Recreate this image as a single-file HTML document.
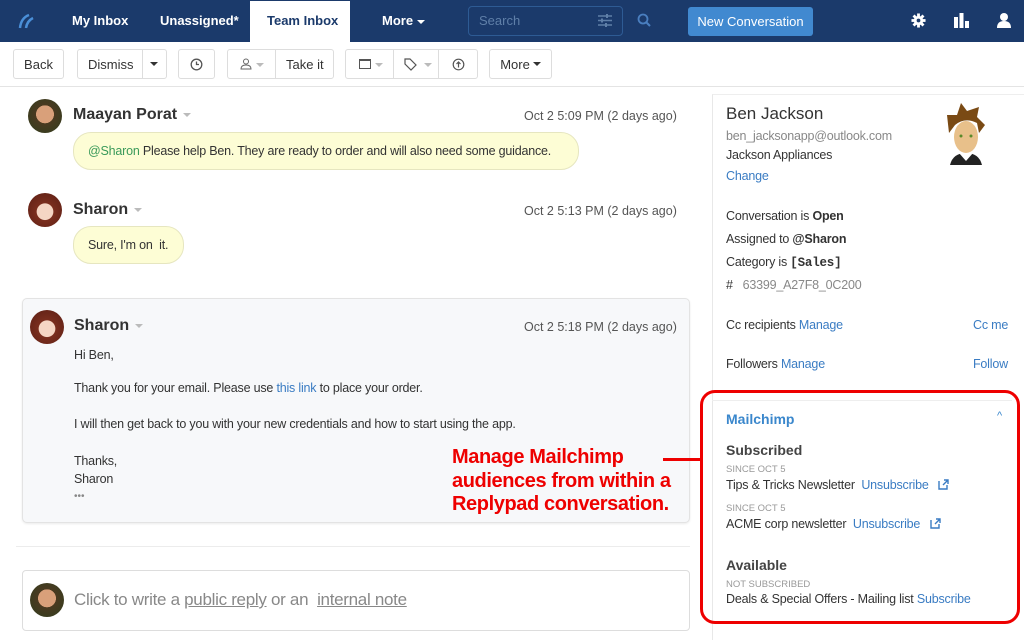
<!DOCTYPE html>
<html><head><meta charset="utf-8"><style>
*{box-sizing:border-box;margin:0;padding:0}
body{width:1024px;height:640px;overflow:hidden;background:#fff;font-family:"Liberation Sans",sans-serif;color:#333;font-size:13px;position:relative}
.abs{position:absolute}
.nav{left:0;top:0;width:1024px;height:42px;background:#1b3a6b}
.btn{position:absolute;top:49px;height:30px;border:1px solid #ddd;border-radius:3px;background:#fff;font-size:13px;color:#333;display:flex;align-items:center;justify-content:center}
.link{color:#3a7cc3}
.avatar{position:absolute;width:34px;height:34px;border-radius:50%}
.name{font-size:16px;font-weight:bold;color:#333}
.time{font-size:12.5px;color:#555}
.bub{position:absolute;background:#fdfdd5;border:1px solid #e6e6c0;border-radius:18px;font-size:12.5px;letter-spacing:-.2px;padding:0 14px;display:flex;align-items:center}
.car{display:inline-block;width:0;height:0;border-left:4px solid transparent;border-right:4px solid transparent;border-top:4px solid #bbb;vertical-align:middle;margin-left:6px}
.side{font-size:12.5px;letter-spacing:-.2px}
</style></head><body>
<div class="abs nav"></div>
<svg class="abs" style="left:17px;top:12px" width="18" height="18" viewBox="0 0 18 18"><path d="M3 16 Q4 6 12 3" stroke="#4a8fd8" stroke-width="2.5" fill="none"/><path d="M9 16 Q10 9 16 6" stroke="#4a8fd8" stroke-width="2.5" fill="none"/></svg>
<div class="abs" style="left:72px;top:13px;color:#fff;font-weight:bold">My Inbox</div>
<div class="abs" style="left:160px;top:13px;color:#fff;font-weight:bold">Unassigned*</div>
<div class="abs" style="left:250px;top:1px;width:100px;height:41px;background:#fff"></div>
<div class="abs" style="left:267px;top:13px;color:#1b3a6b;font-weight:bold">Team Inbox</div>
<div class="abs" style="left:382px;top:13px;color:#fff;font-weight:bold">More <span style="display:inline-block;border-left:4px solid transparent;border-right:4px solid transparent;border-top:4px solid #fff;vertical-align:middle"></span></div>
<div class="abs" style="left:468px;top:6px;width:155px;height:30px;border:1px solid #2e5b94;border-radius:4px;background:#1b3a6b"></div>
<div class="abs" style="left:479px;top:13px;color:#5f7fa8">Search</div>
<svg class="abs" style="left:598px;top:14px" width="14" height="13"><g stroke="#5f7fa8" stroke-width="1.5"><line x1="0" y1="2" x2="14" y2="2"/><line x1="0" y1="6.5" x2="14" y2="6.5"/><line x1="0" y1="11" x2="14" y2="11"/></g><g fill="#5f7fa8"><rect x="8" y="0" width="2" height="4"/><rect x="3" y="4.5" width="2" height="4"/><rect x="7" y="9" width="2" height="4"/></g></svg>
<svg class="abs" style="left:637px;top:13px" width="14" height="14"><circle cx="6" cy="6" r="4.5" stroke="#4a7fc0" stroke-width="1.8" fill="none"/><line x1="9.5" y1="9.5" x2="13" y2="13" stroke="#4a7fc0" stroke-width="2"/></svg>
<div class="abs" style="left:688px;top:7px;width:125px;height:29px;background:#4189d0;border-radius:3px;color:#fff;font-size:13px;display:flex;align-items:center;justify-content:center">New Conversation</div>
<svg class="abs" style="left:911px;top:13px" width="15" height="15" viewBox="0 0 16 16"><circle cx="8" cy="8" r="5" fill="#fff"/><g stroke="#fff" stroke-width="3"><line x1="8" y1="0.5" x2="8" y2="15.5"/><line x1="0.5" y1="8" x2="15.5" y2="8"/><line x1="2.7" y1="2.7" x2="13.3" y2="13.3"/><line x1="13.3" y1="2.7" x2="2.7" y2="13.3"/></g><circle cx="8" cy="8" r="2" fill="#1b3a6b"/></svg>
<svg class="abs" style="left:954px;top:13px" width="15" height="15"><rect x="0" y="4" width="4" height="11" fill="#fff"/><rect x="5.5" y="0" width="4" height="15" fill="#fff"/><rect x="11" y="8" width="4" height="7" fill="#fff"/></svg>
<svg class="abs" style="left:996px;top:12px" width="16" height="16"><circle cx="8" cy="5" r="4" fill="#fff"/><path d="M1 16 Q1 9 8 9 Q15 9 15 16Z" fill="#fff"/></svg>

<div class="abs" style="left:0;top:86px;width:1024px;height:1px;background:#e4e4e4"></div>
<div class="btn" style="left:13px;width:51px">Back</div>
<div class="btn" style="left:77px;width:90px;justify-content:flex-start;padding-left:10px">Dismiss<span style="position:absolute;left:64px;top:0;height:28px;border-left:1px solid #ddd"></span><span style="position:absolute;left:72px;top:12px;border-left:4px solid transparent;border-right:4px solid transparent;border-top:4px solid #333"></span></div>
<div class="btn" style="left:178px;width:37px"><svg width="13" height="13"><circle cx="6.5" cy="6.5" r="5.3" stroke="#555" stroke-width="1.3" fill="none"/><path d="M6.5 3.5V6.5H9" stroke="#555" stroke-width="1.3" fill="none"/></svg></div>
<div class="btn" style="left:227px;width:107px;justify-content:flex-start"><span style="position:absolute;left:12px;top:8px"><svg width="12" height="12"><circle cx="6" cy="3.5" r="2.5" stroke="#666" fill="none"/><path d="M1 11Q1 7 6 7Q11 7 11 11Z" stroke="#666" fill="none"/></svg></span><span class="car" style="position:absolute;left:22px;top:13px"></span><span style="position:absolute;left:47px;top:0;height:28px;border-left:1px solid #ddd"></span><span style="position:absolute;left:58px;top:7px">Take it</span></div>
<div class="btn" style="left:345px;width:133px"><span style="position:absolute;left:13px;top:9px;width:12px;height:10px;border:1.5px solid #555;border-top-width:2.5px"></span><span class="car" style="position:absolute;left:23px;top:13px"></span><span style="position:absolute;left:47px;top:0;height:28px;border-left:1px solid #ddd"></span><svg style="position:absolute;left:58px;top:8px" width="13" height="13"><path d="M1 1H6L12 7L7 12L1 6Z" stroke="#555" stroke-width="1.2" fill="none"/></svg><span class="car" style="position:absolute;left:72px;top:13px"></span><span style="position:absolute;left:92px;top:0;height:28px;border-left:1px solid #ddd"></span><svg style="position:absolute;left:106px;top:8px" width="13" height="13"><circle cx="6.5" cy="6.5" r="5.3" stroke="#555" stroke-width="1.2" fill="none"/><path d="M6.5 9.5V4M4.5 6L6.5 4L8.5 6" stroke="#555" stroke-width="1.2" fill="none"/></svg></div>
<div class="btn" style="left:489px;width:63px">More <span style="display:inline-block;margin-left:3px;border-left:4px solid transparent;border-right:4px solid transparent;border-top:4px solid #333"></span></div>

<div class="avatar" style="left:28px;top:99px;background:radial-gradient(circle at 50% 45%,#d9a07a 0 35%,#4a3a20 36%,#2f3d1e 100%)"></div>
<div class="abs name" style="left:73px;top:106px">Maayan Porat<span class="car"></span></div>
<div class="abs time" style="left:524px;top:109px">Oct 2 5:09 PM (2 days ago)</div>
<div class="bub" style="left:73px;top:132px;width:506px;height:38px"><span style="color:#3a9a5a">@Sharon</span>&nbsp;Please help Ben. They are ready to order and will also need some guidance.</div>

<div class="avatar" style="left:28px;top:193px;background:radial-gradient(circle at 50% 55%,#f5d6c4 0 32%,#7a2e1e 34%,#5a1e14 100%)"></div>
<div class="abs name" style="left:73px;top:201px">Sharon<span class="car"></span></div>
<div class="abs time" style="left:524px;top:204px">Oct 2 5:13 PM (2 days ago)</div>
<div class="bub" style="left:73px;top:226px;width:111px;height:38px">Sure, I'm on &nbsp;it.</div>

<div class="abs" style="left:22px;top:298px;width:668px;height:225px;background:#f7f8fa;border:1px solid #e3e3e3;border-radius:5px;box-shadow:0 1px 2px rgba(0,0,0,.08)"></div>
<div class="avatar" style="left:30px;top:310px;background:radial-gradient(circle at 50% 55%,#f5d6c4 0 32%,#7a2e1e 34%,#5a1e14 100%)"></div>
<div class="abs name" style="left:74px;top:317px">Sharon<span class="car"></span></div>
<div class="abs time" style="left:524px;top:320px">Oct 2 5:18 PM (2 days ago)</div>
<div class="abs" style="left:74px;top:346px;font-size:12.5px;letter-spacing:-.2px;line-height:18px">Hi Ben,</div>
<div class="abs" style="left:74px;top:381px;font-size:12.5px;letter-spacing:-.2px">Thank you for your email. Please use <span class="link">this link</span> to place your order.</div>
<div class="abs" style="left:74px;top:417px;font-size:12.5px;letter-spacing:-.2px">I will then get back to you with your new credentials and how to start using the app.</div>
<div class="abs" style="left:74px;top:452px;font-size:12.5px;letter-spacing:-.2px;line-height:18px">Thanks,<br>Sharon</div>
<div class="abs" style="left:74px;top:491px;font-size:10px;color:#888">•••</div>
<div class="abs" style="left:452px;top:446px;color:#e00;font-weight:900;font-size:20px;line-height:23.5px;letter-spacing:-.4px">Manage Mailchimp<br>audiences from within a<br>Replypad conversation.</div>
<div class="abs" style="left:663px;top:458px;width:38px;height:3px;background:#e00"></div>

<div class="abs" style="left:16px;top:546px;width:674px;height:1px;background:#ececec"></div>
<div class="abs" style="left:22px;top:570px;width:668px;height:61px;border:1px solid #ddd;border-radius:4px"></div>
<div class="avatar" style="left:30px;top:583px;background:radial-gradient(circle at 50% 45%,#d9a07a 0 35%,#4a3a20 36%,#2f3d1e 100%)"></div>
<div class="abs" style="left:74px;top:590px;font-size:17px;color:#888;letter-spacing:-.3px">Click to write a <u>public reply</u> or an &nbsp;<u>internal note</u></div>

<div class="abs" style="left:712px;top:94px;width:312px;height:546px;border-left:1px solid #e8e8e8;border-top:1px solid #eee"></div>
<div class="abs" style="left:726px;top:104px;font-size:17px;color:#333">Ben Jackson</div>
<div class="abs side" style="left:726px;top:129px;color:#888">ben_jacksonapp@outlook.com</div>
<div class="abs side" style="left:726px;top:148px">Jackson Appliances</div>
<div class="abs side link" style="left:726px;top:169px">Change</div>
<svg class="abs" style="left:945px;top:103px" width="42" height="62"><ellipse cx="21" cy="34" rx="12" ry="16" fill="#e8c08a"/><path d="M4 30 L2 12 L12 12 L16 0 L22 8 L34 4 L32 14 L40 22 L34 30 L32 20 Q20 14 10 22 Z" fill="#7a4a14"/><circle cx="16" cy="33" r="1.5" fill="#5a8a2a"/><circle cx="26" cy="33" r="1.5" fill="#5a8a2a"/><path d="M5 62 Q8 50 21 50 Q34 50 37 62Z" fill="#222"/><path d="M14 50 L21 58 L28 50Z" fill="#fff"/></svg>
<div class="abs side" style="left:726px;top:209px">Conversation is <b>Open</b></div>
<div class="abs side" style="left:726px;top:232px">Assigned to <b>@Sharon</b></div>
<div class="abs side" style="left:726px;top:255px">Category is <b style="font-family:'Liberation Mono',monospace">[Sales]</b></div>
<div class="abs side" style="left:726px;top:278px"># &nbsp;&nbsp;<span style="color:#888">63399_A27F8_0C200</span></div>
<div class="abs side" style="left:726px;top:318px">Cc recipients <span class="link">Manage</span></div>
<div class="abs side link" style="left:973px;top:318px">Cc me</div>
<div class="abs side" style="left:726px;top:357px">Followers <span class="link">Manage</span></div>
<div class="abs side link" style="left:973px;top:357px">Follow</div>

<div class="abs" style="left:712px;top:400px;width:300px;height:1px;background:#eee"></div>
<div class="abs" style="left:700px;top:390px;width:320px;height:234px;border:3px solid #e00;border-radius:15px"></div>
<div class="abs" style="left:726px;top:411px;font-size:14px;font-weight:bold;color:#3a87cc">Mailchimp</div>
<div class="abs" style="left:997px;top:410px;color:#3a87cc;font-size:11px">^</div>
<div class="abs" style="left:726px;top:442px;font-size:14px;font-weight:bold;color:#444">Subscribed</div>
<div class="abs" style="left:726px;top:464px;font-size:9.5px;color:#999">SINCE OCT 5</div>
<div class="abs side" style="left:726px;top:478px">Tips &amp; Tricks Newsletter &nbsp;<span class="link">Unsubscribe</span> &nbsp;&nbsp;<svg width="11" height="11" style="vertical-align:-1px"><path d="M1 2V10H9V6M5 6L10 1M6 1H10V5" stroke="#3a7cc3" stroke-width="1.4" fill="none"/></svg></div>
<div class="abs" style="left:726px;top:503px;font-size:9.5px;color:#999">SINCE OCT 5</div>
<div class="abs side" style="left:726px;top:517px">ACME corp newsletter &nbsp;<span class="link">Unsubscribe</span> &nbsp;&nbsp;<svg width="11" height="11" style="vertical-align:-1px"><path d="M1 2V10H9V6M5 6L10 1M6 1H10V5" stroke="#3a7cc3" stroke-width="1.4" fill="none"/></svg></div>
<div class="abs" style="left:726px;top:557px;font-size:14px;font-weight:bold;color:#444">Available</div>
<div class="abs" style="left:726px;top:579px;font-size:9.5px;color:#999">NOT SUBSCRIBED</div>
<div class="abs side" style="left:726px;top:592px">Deals &amp; Special Offers - Mailing list <span class="link">Subscribe</span></div>
</body></html>
